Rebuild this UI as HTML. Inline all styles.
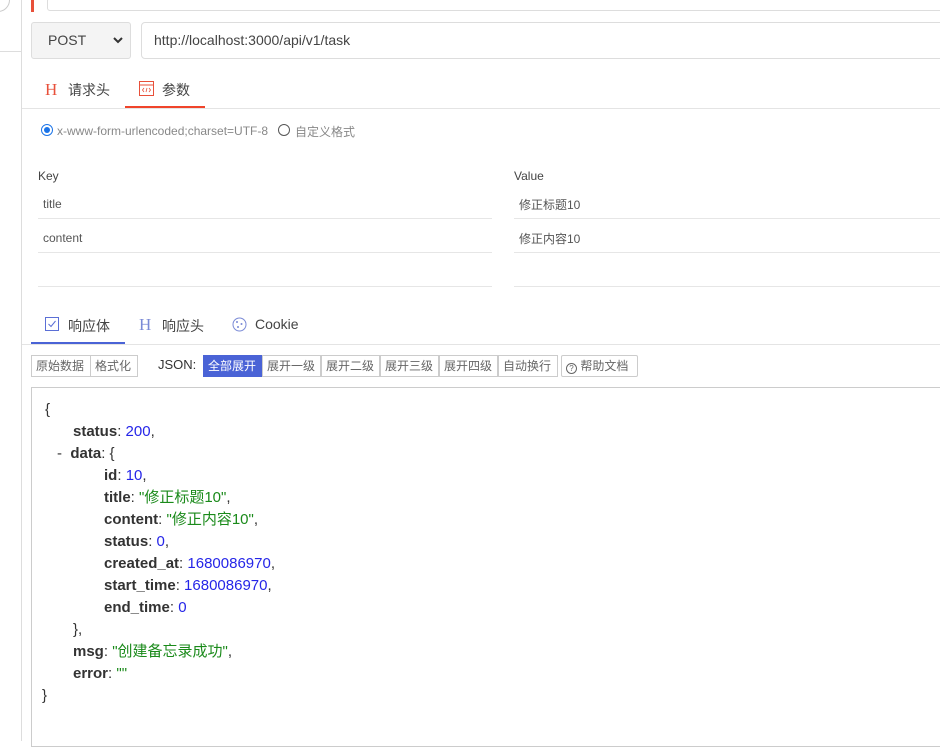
<!DOCTYPE html>
<html><head><meta charset="utf-8"><style>
*{margin:0;padding:0;box-sizing:border-box}
body{width:940px;height:741px;overflow:hidden;background:#fff;font-family:"Liberation Sans","Noto Sans CJK SC",sans-serif;position:relative;color:#333}
.a{position:absolute}
.j{position:absolute;font-size:15px;line-height:22px;white-space:nowrap;color:#333}
.j b{color:#333}
.n{color:#2525e8}.s{color:#1a8a1a}
.btn{position:absolute;top:355px;height:22px;border:1px solid #ccc;font-size:12px;line-height:20px;color:#666;padding:0 4px;background:#fff}
</style></head><body>
<div class="a" style="left:21px;top:0;width:1px;height:741px;background:#ddd"></div>
<div class="a" style="left:-14px;top:-12px;width:24px;height:24px;border:1px solid #ccc;border-radius:50%"></div>
<div class="a" style="left:0;top:51px;width:21px;height:1px;background:#ddd"></div>
<div class="a" style="left:31px;top:0;width:3px;height:12px;background:#e8503a"></div>
<div class="a" style="left:47px;top:-2px;width:900px;height:13px;border:1px solid #ddd;border-radius:3px"></div>
<div class="a" style="left:31px;top:22px;width:100px;height:37px;background:#f4f4f4;border:1px solid #ddd;border-radius:3px;font-size:14px;line-height:35px;padding-left:16px;color:#444">POST</div>
<svg class="a" style="left:113px;top:37px" width="10" height="7"><path d="M1 1L5 5L9 1" stroke="#333" stroke-width="2" fill="none"/></svg>
<div class="a" style="left:141px;top:22px;width:810px;height:37px;border:1px solid #ddd;border-radius:4px;font-size:14px;line-height:35px;padding-left:12px;color:#444">http://localhost:3000/api/v1/task</div>
<div class="a" style="left:45px;top:80px;font-size:17px;color:#e8503a;font-family:'Liberation Serif',serif">H</div>
<div class="a" style="left:68px;top:80px;font-size:14px;color:#444">请求头</div>
<svg class="a" style="left:139px;top:81px" width="15" height="15"><rect x="0.5" y="0.5" width="14" height="14" fill="none" stroke="#e8503a"/><line x1="0.5" y1="4" x2="14.5" y2="4" stroke="#e8503a"/><path d="M5 7L3.5 9L5 11M10 7L11.5 9L10 11M8 7L7 11" stroke="#e8503a" fill="none" stroke-width=".8"/></svg>
<div class="a" style="left:162px;top:80px;font-size:14px;color:#444">参数</div>
<div class="a" style="left:125px;top:106px;width:80px;height:2px;background:#f0442a"></div>
<div class="a" style="left:22px;top:108px;width:918px;height:1px;background:#e4e4e4"></div>
<div class="a" style="left:41px;top:124px;width:12px;height:12px;border:1px solid #1a73e8;border-radius:50%"><div style="margin:2px;width:6px;height:6px;border-radius:50%;background:#1a73e8"></div></div>
<div class="a" style="left:57px;top:124px;font-size:12px;color:#888">x-www-form-urlencoded;charset=UTF-8</div>
<div class="a" style="left:278px;top:124px;width:12px;height:12px;border:1px solid #555;border-radius:50%"></div>
<div class="a" style="left:295px;top:123px;font-size:12px;color:#888">自定义格式</div>
<div class="a" style="left:38px;top:169px;font-size:12px;color:#444">Key</div>
<div class="a" style="left:514px;top:169px;font-size:12px;color:#444">Value</div>
<div class="a" style="left:43px;top:197px;font-size:12px;color:#555">title</div>
<div class="a" style="left:519px;top:196px;font-size:12px;color:#555">修正标题10</div>
<div class="a" style="left:43px;top:231px;font-size:12px;color:#555">content</div>
<div class="a" style="left:519px;top:230px;font-size:12px;color:#555">修正内容10</div>
<div class="a" style="left:38px;top:218px;width:454px;height:1px;background:#e6e6e6"></div>
<div class="a" style="left:514px;top:218px;width:426px;height:1px;background:#e6e6e6"></div>
<div class="a" style="left:38px;top:252px;width:454px;height:1px;background:#e6e6e6"></div>
<div class="a" style="left:514px;top:252px;width:426px;height:1px;background:#e6e6e6"></div>
<div class="a" style="left:38px;top:286px;width:454px;height:1px;background:#e6e6e6"></div>
<div class="a" style="left:514px;top:286px;width:426px;height:1px;background:#e6e6e6"></div>
<svg class="a" style="left:45px;top:317px" width="15" height="15"><rect x="0.5" y="0.5" width="13" height="13" fill="none" stroke="#5b6fd6"/><path d="M3.5 7L6 9.5L10.5 4" stroke="#5b6fd6" fill="none"/></svg>
<div class="a" style="left:68px;top:316px;font-size:14px;color:#444">响应体</div>
<div class="a" style="left:139px;top:315px;font-size:17px;color:#7a8ad6;font-family:'Liberation Serif',serif">H</div>
<div class="a" style="left:162px;top:316px;font-size:14px;color:#444">响应头</div>
<svg class="a" style="left:232px;top:317px" width="15" height="15"><circle cx="7.5" cy="7.5" r="6.5" fill="none" stroke="#7a8ad6"/><circle cx="5" cy="5" r="1" fill="#7a8ad6"/><circle cx="9.5" cy="7" r="1" fill="#7a8ad6"/><circle cx="6" cy="10" r="1" fill="#7a8ad6"/></svg>
<div class="a" style="left:255px;top:316px;font-size:14px;color:#444">Cookie</div>
<div class="a" style="left:31px;top:342px;width:94px;height:2px;background:#4a63d6"></div>
<div class="a" style="left:22px;top:344px;width:918px;height:1px;background:#e4e4e4"></div>
<div class="btn" style="left:31px;width:60px">原始数据</div>
<div class="btn" style="left:90px;width:48px">格式化</div>
<div class="a" style="left:158px;top:357px;font-size:13px;color:#333">JSON:</div>
<div class="btn" style="left:203px;width:59px;background:#4a63d6;border-color:#4a63d6;color:#fff">全部展开</div>
<div class="btn" style="left:262px;width:59px">展开一级</div>
<div class="btn" style="left:321px;width:59px">展开二级</div>
<div class="btn" style="left:380px;width:59px">展开三级</div>
<div class="btn" style="left:439px;width:59px">展开四级</div>
<div class="btn" style="left:498px;width:60px">自动换行</div>
<div class="btn" style="left:561px;width:77px;border-radius:2px"><span style="display:inline-block;width:11px;height:11px;border:1px solid #666;border-radius:50%;font-size:8px;line-height:9px;text-align:center;vertical-align:-1px">?</span> 帮助文档</div>
<div class="a" style="left:31px;top:387px;width:920px;height:360px;border:1px solid #ccc"></div>
<div class="j" style="left:45px;top:399px">{</div>
<div class="j" style="left:73px;top:421px"><b>status</b>: <span class="n">200</span>,</div>
<div class="j" style="left:57px;top:443px">- &nbsp;<b>data</b>: {</div>
<div class="j" style="left:104px;top:465px"><b>id</b>: <span class="n">10</span>,</div>
<div class="j" style="left:104px;top:487px"><b>title</b>: <span class="s">"修正标题10"</span>,</div>
<div class="j" style="left:104px;top:509px"><b>content</b>: <span class="s">"修正内容10"</span>,</div>
<div class="j" style="left:104px;top:531px"><b>status</b>: <span class="n">0</span>,</div>
<div class="j" style="left:104px;top:553px"><b>created_at</b>: <span class="n">1680086970</span>,</div>
<div class="j" style="left:104px;top:575px"><b>start_time</b>: <span class="n">1680086970</span>,</div>
<div class="j" style="left:104px;top:597px"><b>end_time</b>: <span class="n">0</span></div>
<div class="j" style="left:73px;top:619px">},</div>
<div class="j" style="left:73px;top:641px"><b>msg</b>: <span class="s">"创建备忘录成功"</span>,</div>
<div class="j" style="left:73px;top:663px"><b>error</b>: <span class="s">""</span></div>
<div class="j" style="left:42px;top:685px">}</div>
</body></html>
